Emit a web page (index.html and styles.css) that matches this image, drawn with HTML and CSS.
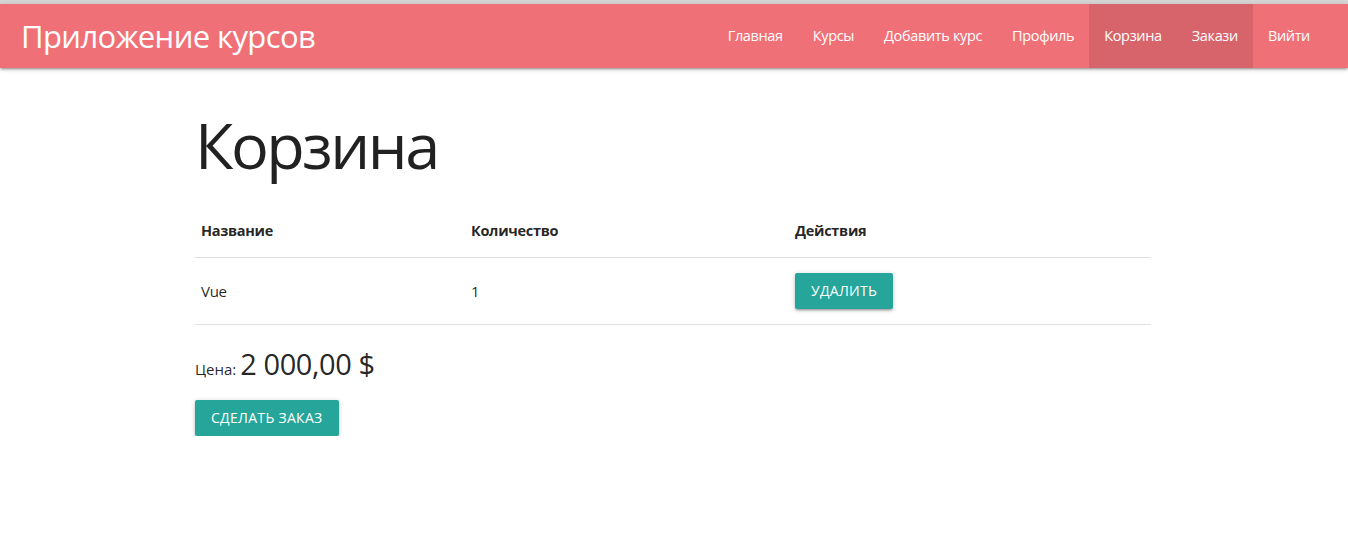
FILE: index.html
```html
<!DOCTYPE html>
<html lang="ru">
<head>
<meta charset="utf-8">
<title>Корзина</title>
<link rel="stylesheet" href="styles.css">
</head>
<body>
<div class="topstrip"></div>
<nav class="navbar">
  <a class="brand" href="#">Приложение курсов</a>
  <ul class="nav-links">
    <li><a href="#">Главная</a></li>
    <li><a href="#">Курсы</a></li>
    <li><a href="#">Добавить курс</a></li>
    <li><a href="#">Профиль</a></li>
    <li class="active"><a href="#">Корзина</a></li>
    <li class="active"><a href="#">Закази</a></li>
    <li><a href="#">Вийти</a></li>
  </ul>
</nav>
<main class="container">
  <h1 class="title">Корзина</h1>
  <table class="cart">
    <thead>
      <tr>
        <th class="c1">Название</th>
        <th class="c2">Количество</th>
        <th>Действия</th>
      </tr>
    </thead>
    <tbody>
      <tr>
        <td>Vue</td>
        <td>1</td>
        <td><button class="btn">Удалить</button></td>
      </tr>
    </tbody>
  </table>
  <p class="total">Цена: <span class="price">2&nbsp;000,00&nbsp;$</span></p>
  <button class="btn">Сделать заказ</button>
</main>
</body>
</html>
```
FILE: styles.css
```css
html { font-size: 15px; }
body {
  margin: 0;
  font-family: "Open Sans", "Noto Sans", sans-serif;
  color: rgba(0,0,0,0.87);
  background: #fff;
}
.topstrip { height: 4px; background: #d6d6d6; }
.navbar {
  height: 64px;
  background: #f07077;
  display: flex;
  align-items: center;
  justify-content: space-between;
  padding: 0 23px 0 21px;
  box-shadow: 0 2px 2px 0 rgba(0,0,0,0.14), 0 3px 1px -2px rgba(0,0,0,0.12), 0 1px 5px 0 rgba(0,0,0,0.2);
  position: relative;
}
.brand {
  color: #fff;
  text-decoration: none;
  font-size: 31px;
  letter-spacing: -0.6px;
  line-height: 64px;
}
.nav-links {
  list-style: none;
  margin: 0;
  padding: 0;
  display: flex;
  height: 64px;
}
.nav-links li { height: 64px; }
.nav-links li.active { background: rgba(0,0,0,0.1); }
.nav-links a {
  display: block;
  padding: 0 15px;
  line-height: 64px;
  color: #fff;
  text-decoration: none;
  font-size: 14.5px;
  letter-spacing: -0.35px;
}
.container {
  width: 956px;
  padding-right: 2px;
  margin: 0 auto;
}
.title {
  font-size: 63px;
  font-weight: 400;
  line-height: 69px;
  margin: 42px 0 26px;
  letter-spacing: -2.5px;
}
.cart {
  width: 100%;
  border-collapse: collapse;
  font-size: 15px;
}
.cart tr { border-bottom: 1px solid rgba(0,0,0,0.12); }
.cart th, .cart td {
  text-align: left;
  padding: 15px 5px 15px 6px;
  line-height: 22px;
  vertical-align: middle;
}
.cart th { font-weight: 700; font-size: 14.5px; letter-spacing: -0.3px; }
.cart td { letter-spacing: -0.3px; }
.cart .c1 { width: 259px; }
.cart .c2 { width: 313px; }
.btn {
  display: inline-block;
  height: 36px;
  line-height: 36px;
  padding: 0 16px;
  border: none;
  border-radius: 2px;
  background: #26a69a;
  color: #fff;
  font-family: inherit;
  font-size: 14px;
  letter-spacing: 0.3px;
  text-transform: uppercase;
  box-shadow: 0 2px 2px 0 rgba(0,0,0,0.14), 0 3px 1px -2px rgba(0,0,0,0.12), 0 1px 5px 0 rgba(0,0,0,0.2);
  cursor: pointer;
}
.total {
  margin: 23px 0 15px;
  font-size: 15px;
  line-height: 32px;
}
.price { font-size: 29px; letter-spacing: -0.4px; }
```
